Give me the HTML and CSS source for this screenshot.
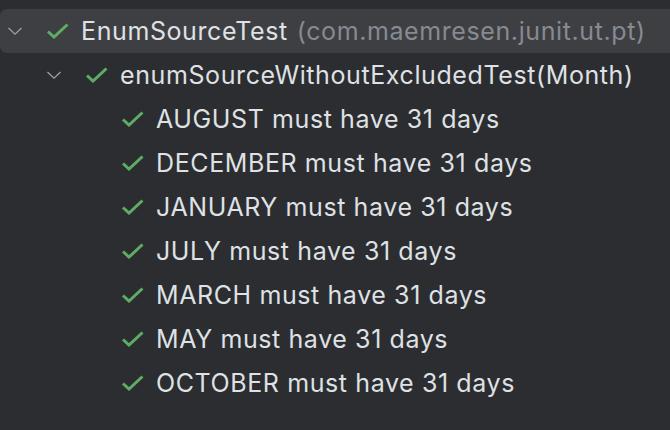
FILE: index.html
```html
<!DOCTYPE html>
<html>
<head>
<meta charset="utf-8">
<link rel="stylesheet" href="styles.css">
</head>
<body>
<div class="tree">
  <div class="row selected lvl0">
    <svg class="chev" viewBox="0 0 16 16"><path d="M1.5 5 L8 11.2 L14.5 5" /></svg>
    <svg class="check" viewBox="0 0 24 16"><path d="M2 8.5 L8 14 L21.5 1.5" /></svg>
    <span class="label">EnumSourceTest</span><span class="pkg">(com.maemresen.junit.ut.pt)</span>
  </div>
  <div class="row lvl1">
    <svg class="chev" viewBox="0 0 16 16"><path d="M1.5 5 L8 11.2 L14.5 5" /></svg>
    <svg class="check" viewBox="0 0 24 16"><path d="M2 8.5 L8 14 L21.5 1.5" /></svg>
    <span class="label">enumSourceWithoutExcludedTest(Month)</span>
  </div>
  <div class="row lvl2"><svg class="check" viewBox="0 0 24 16"><path d="M2 8.5 L8 14 L21.5 1.5" /></svg><span class="label">AUGUST must have 31 days</span></div>
  <div class="row lvl2"><svg class="check" viewBox="0 0 24 16"><path d="M2 8.5 L8 14 L21.5 1.5" /></svg><span class="label">DECEMBER must have 31 days</span></div>
  <div class="row lvl2"><svg class="check" viewBox="0 0 24 16"><path d="M2 8.5 L8 14 L21.5 1.5" /></svg><span class="label">JANUARY must have 31 days</span></div>
  <div class="row lvl2"><svg class="check" viewBox="0 0 24 16"><path d="M2 8.5 L8 14 L21.5 1.5" /></svg><span class="label">JULY must have 31 days</span></div>
  <div class="row lvl2"><svg class="check" viewBox="0 0 24 16"><path d="M2 8.5 L8 14 L21.5 1.5" /></svg><span class="label">MARCH must have 31 days</span></div>
  <div class="row lvl2"><svg class="check" viewBox="0 0 24 16"><path d="M2 8.5 L8 14 L21.5 1.5" /></svg><span class="label">MAY must have 31 days</span></div>
  <div class="row lvl2"><svg class="check" viewBox="0 0 24 16"><path d="M2 8.5 L8 14 L21.5 1.5" /></svg><span class="label">OCTOBER must have 31 days</span></div>
</div>
</body>
</html>
```
FILE: styles.css
```css
html, body {
  margin: 0;
  padding: 0;
  background: #2b2d30;
  width: 670px;
  height: 430px;
  overflow: hidden;
}
.tree {
  padding-top: 9px;
  font-family: Inter, "Noto Sans", sans-serif;
  font-size: 25px;
  letter-spacing: 0.6px;
  color: #dfe1e5;
}
.row {
  height: 44px;
  display: flex;
  align-items: center;
  white-space: nowrap;
}
.selected {
  background: #3d3f43;
  border-radius: 7px 0 0 7px;
}
.lvl0 { padding-left: 7px; }
.lvl1 { padding-left: 46px; }
.lvl2 { padding-left: 121px; }
.chev {
  width: 16px;
  height: 16px;
  margin-right: 23px;
  fill: none;
  stroke: #9da0a8;
  stroke-width: 1.3;
}
.check {
  width: 24px;
  height: 16px;
  margin-right: 11px;
  fill: none;
  stroke: #5fad65;
  stroke-width: 3;
}
.pkg {
  color: #868a91;
  margin-left: 9px;
}
```
